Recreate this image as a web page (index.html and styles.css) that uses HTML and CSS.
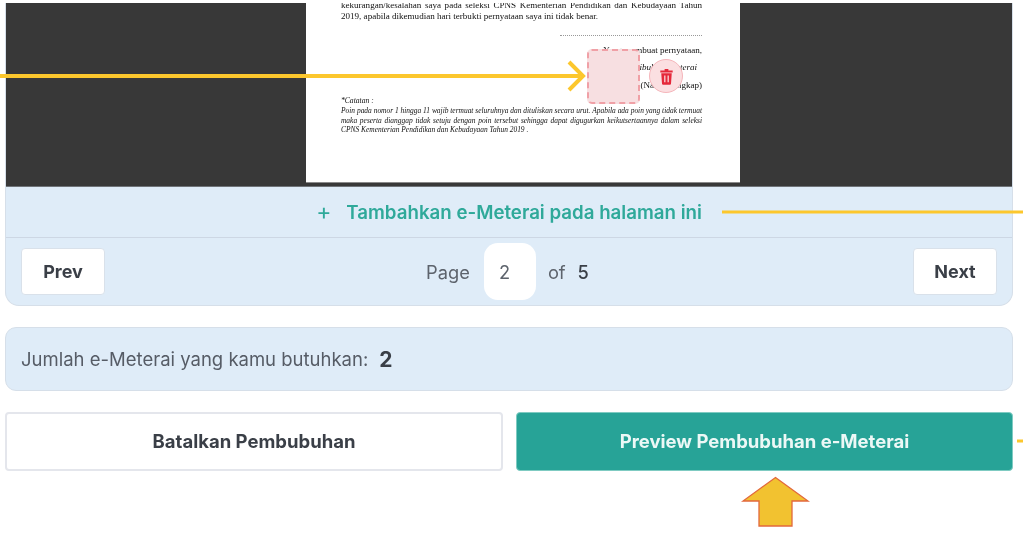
FILE: index.html
```html
<!DOCTYPE html>
<html lang="id">
<head>
<meta charset="utf-8">
<title>Pembubuhan e-Meterai</title>
<link rel="stylesheet" href="styles.css">
</head>
<body>
<main class="page">
  <section class="panel">
    <div class="viewer">
      <article class="doc">
        <div class="doc-text">
          <p class="clip">kekurangan/kesalahan saya pada seleksi CPNS Kementerian Pendidikan dan Kebudayaan Tahun 2019, apabila dikemudian hari terbukti pernyataan saya ini tidak benar.</p>
          <div class="sign">
            <div class="dots"></div>
            <p class="sign-a">Yang membuat pernyataan,</p>
            <p class="sign-b">dibubuhi meterai</p>
            <p class="sign-c">(Nama Lengkap)</p>
          </div>
          <p class="note-h">*Catatan :</p>
          <p class="note">Poin pada nomor 1 hingga 11 wajib termuat seluruhnya dan dituliskan secara urut. Apabila ada poin yang tidak termuat maka peserta dianggap tidak setuju dengan poin tersebut sehingga dapat digugurkan keikutsertaannya dalam seleksi CPNS Kementerian Pendidikan dan Kebudayaan Tahun 2019 .</p>
        </div>
        <div class="seal"></div>
        <div class="trash">
          <svg viewBox="0 0 16 18" width="15" height="17" aria-hidden="true">
            <path d="M6 1h4v1.600h4.600v2H1.400v-2H6zM2.400 5.600h11.200l-.8 11a1.200 1.200 0 0 1-1.200 1.100H4.400a1.200 1.200 0 0 1-1.200-1.100z" fill="#e5283a"/>
            <path d="M6.200 8v7M9.800 8v7" stroke="#fbd5d7" stroke-width="1.400"/>
          </svg>
        </div>
      </article>
    </div>
    <div class="add">
      <span class="plus">+</span>
      <span>Tambahkan e-Meterai pada halaman ini</span>
    </div>
    <div class="pager">
      <button class="btn-small">Prev</button>
      <div class="pages">
        <span>Page</span>
        <span class="page-input">2</span>
        <span>of</span>
        <strong>5</strong>
      </div>
      <button class="btn-small">Next</button>
    </div>
  </section>
  <section class="count">
    <span>Jumlah e-Meterai yang kamu butuhkan:</span>
    <strong>2</strong>
  </section>
  <div class="actions">
    <button class="btn btn-outline">Batalkan Pembubuhan</button>
    <button class="btn btn-primary">Preview Pembubuhan e-Meterai</button>
  </div>
</main>
<svg class="annot" viewBox="0 0 1023 536" width="1023" height="536" aria-hidden="true">
  <path d="M0 76H580M569 62l14 14-14 14" fill="none" stroke="#fcc72d" stroke-width="4"/>
  <path d="M722 212H1023M1017 441H1023" fill="none" stroke="#fcc72d" stroke-width="3"/>
  <path d="M775.500 477.500L808 501H792V526H759V501H743Z" fill="#f2c230" stroke="#e2683c" stroke-width="1.300"/>
</svg>
</body>
</html>
```

FILE: styles.css
```css
* { box-sizing: border-box; }
html, body { margin: 0; padding: 0; }
body {
  width: 1023px;
  height: 536px;
  overflow: hidden;
  position: relative;
  background: #fff;
  font-family: Inter, "Liberation Sans", sans-serif;
  color: #3a3f47;
}
p { margin: 0; }
button { font-family: inherit; cursor: pointer; }
.page {
  padding: 3px 10px 0 5px;
  display: flex;
  flex-direction: column;
  filter: blur(0.4px);
}
.panel {
  background: #dfecf8;
  border: 1px solid #d6dfe9;
  border-top: 0;
  border-radius: 0 0 14px 14px;
  overflow: hidden;
  height: 303px;
  display: flex;
  flex-direction: column;
}
.viewer {
  height: 184px;
  flex: none;
  background: #383838;
  display: flex;
  padding-left: 300px;
  border-bottom: 1px solid #6f7378;
}
.doc {
  width: 434px;
  height: 179px;
  background: #fff;
  position: relative;
  overflow: hidden;
  box-shadow: 0 1px 0 #8a8a8a;
}
.doc-text {
  padding: 0 38px 0 35px;
  font-family: "Liberation Serif", serif;
  font-size: 9.050px;
  line-height: 11px;
  color: #111;
}
.clip { margin-top: -3px; text-align: justify; }
.sign { height: 61px; text-align: right; }
.dots {
  border-top: 1px dotted #999;
  width: 142px;
  margin: 13px 0 0 auto;
}
.sign-a { margin-top: 9px; }
.sign-b { margin: 6px 5px 0 0; font-style: italic; }
.sign-c { margin-top: 7px; }
.note-h { font-style: italic; font-size: 7.600px; line-height: 10px; }
.note {
  font-style: italic;
  font-size: 7.450px;
  line-height: 9.500px;
  text-align: justify;
}
.seal {
  position: absolute;
  left: 281px;
  top: 46px;
  width: 53px;
  height: 55px;
  background: #f7dfe1;
  border: 2px dashed #f0a0a6;
  border-radius: 5px;
}
.trash {
  position: absolute;
  left: 343px;
  top: 56px;
  width: 34px;
  height: 34px;
  border-radius: 50%;
  background: #fbdfe1;
  border: 1px solid #f5b6bb;
  display: flex;
  align-items: center;
  justify-content: center;
}
.add {
  height: 51px;
  flex: none;
  display: flex;
  align-items: center;
  justify-content: center;
  gap: 15px;
  color: #2fa99a;
  font-size: 18.700px;
  font-weight: 600;
  border-bottom: 1px solid #cdd7e4;
}
.plus { font-size: 23px; font-weight: 400; line-height: 1; }
.pager {
  flex: 1;
  display: flex;
  align-items: center;
  justify-content: space-between;
  padding: 0 15px;
}
.btn-small {
  width: 84px;
  height: 47px;
  background: #fff;
  border: 1px solid #d9e1ea;
  border-radius: 4px;
  color: #3a3f47;
  font-size: 18px;
  font-weight: 700;
}
.pages {
  display: flex;
  align-items: center;
  font-size: 18.300px;
  color: #5d636c;
  margin-left: -3px;
}
.page-input {
  width: 52px;
  height: 57px;
  background: #fff;
  border-radius: 14px;
  margin: 0 12px 0 14px;
  padding-left: 15px;
  display: flex;
  align-items: center;
}
.pages strong {
  font-weight: 500;
  color: #3a3f47;
  margin-left: 12px;
}
.count {
  margin-top: 21px;
  height: 64px;
  background: #dfecf8;
  border: 1px solid #d6dfe9;
  border-radius: 11px;
  padding: 0 15px;
  display: flex;
  align-items: center;
  gap: 11px;
  font-size: 18.500px;
  color: #565c66;
}
.count strong { font-size: 21px; font-weight: 700; color: #3a3f47; }
.actions {
  margin-top: 21px;
  display: grid;
  grid-template-columns: 498px 497px;
  gap: 13px;
}
.btn {
  height: 59px;
  padding-bottom: 3px;
  border-radius: 4px;
  font-size: 18.500px;
  font-weight: 700;
}
.btn-outline { background: #fff; border: 2px solid #e4e6ec; color: #3a3f47; }
.btn-primary { background: #27a397; border: 1px solid #7fcbc2; color: #ecf8f6; }
.annot { position: absolute; left: 0; top: 0; pointer-events: none; }
```
